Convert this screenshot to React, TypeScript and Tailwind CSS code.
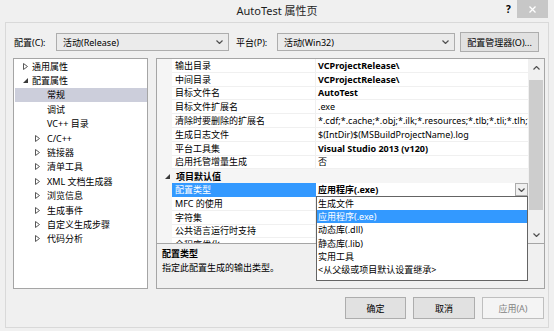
import React from 'react';

type TreeNode = { label: string; level: 1 | 2; arrow?: 'closed' | 'open'; selected?: boolean };

const treeItems: TreeNode[] = [
  { label: '通用属性', level: 1, arrow: 'closed' },
  { label: '配置属性', level: 1, arrow: 'open' },
  { label: '常规', level: 2, selected: true },
  { label: '调试', level: 2 },
  { label: 'VC++ 目录', level: 2 },
  { label: 'C/C++', level: 2, arrow: 'closed' },
  { label: '链接器', level: 2, arrow: 'closed' },
  { label: '清单工具', level: 2, arrow: 'closed' },
  { label: 'XML 文档生成器', level: 2, arrow: 'closed' },
  { label: '浏览信息', level: 2, arrow: 'closed' },
  { label: '生成事件', level: 2, arrow: 'closed' },
  { label: '自定义生成步骤', level: 2, arrow: 'closed' },
  { label: '代码分析', level: 2, arrow: 'closed' },
];

type GridRow = { name: string; value?: string; bold?: boolean; category?: boolean; selected?: boolean };

// values under the open list are hidden by it, so they are left empty
const gridRows: GridRow[] = [
  { name: '输出目录', value: 'VCProjectRelease\\', bold: true },
  { name: '中间目录', value: 'VCProjectRelease\\', bold: true },
  { name: '目标文件名', value: 'AutoTest', bold: true },
  { name: '目标文件扩展名', value: '.exe' },
  { name: '清除时要删除的扩展名', value: '*.cdf;*.cache;*.obj;*.ilk;*.resources;*.tlb;*.tli;*.tlh;*.tmp;*.rsp;*.pgc;*.pgd;*.meta' },
  { name: '生成日志文件', value: '$(IntDir)$(MSBuildProjectName).log' },
  { name: '平台工具集', value: 'Visual Studio 2013 (v120)', bold: true },
  { name: '启用托管增量生成', value: '否' },
  { name: '项目默认值', category: true },
  { name: '配置类型', value: '应用程序(.exe)', bold: true, selected: true },
  { name: 'MFC 的使用' },
  { name: '字符集' },
  { name: '公共语言运行时支持' },
  { name: '全程序优化' },
];

const listItems = ['生成文件', '应用程序(.exe)', '动态库(.dll)', '静态库(.lib)', '实用工具', '<从父级或项目默认设置继承>'];

const Arrow = ({ kind }: { kind: 'closed' | 'open' }) =>
  kind === 'closed' ? (
    <svg width="5" height="7" viewBox="0 0 5 7">
      <path d="M0.5 0.5 L4.5 3.5 L0.5 6.5 Z" fill="none" stroke="#595959" strokeWidth="1" />
    </svg>
  ) : (
    <svg width="5" height="5" viewBox="0 0 5 5">
      <path d="M5 0 L5 5 L0 5 Z" fill="#3a3a3a" />
    </svg>
  );

const Chevron = ({ up = false }: { up?: boolean }) => (
  <svg width="7" height="4" viewBox="0 0 7 4">
    <path d={up ? 'M0.5 3.5 L3.5 0.5 L6.5 3.5' : 'M0.5 0.5 L3.5 3.5 L6.5 0.5'} fill="none" stroke="#505050" strokeWidth="1.2" />
  </svg>
);

const Combo = ({ text, width }: { text: string; width: string }) => (
  <div className={`${width} h-[18px] border border-[#adadad] bg-[#ebebeb] flex items-center pl-[6px] pr-[5px]`}>
    <span className="flex-1">{text}</span>
    <Chevron />
  </div>
);

const App: React.FC = () => {
  return (
    <div className="w-[554px] h-[331px] bg-[#f0f0f0] overflow-hidden font-['Noto_Sans','Noto_Sans_CJK_SC',sans-serif] text-[9px] leading-none text-black">
      {/* title bar */}
      <div className="h-[22px] flex items-start">
        <div className="w-[54px]" />
        <div className="flex-1 text-center text-[11px] pt-[5px] text-[#1e1e1e]">AutoTest 属性页</div>
        <div className="w-[54px] flex items-start">
          <div className="w-[17px] pt-[4px] text-[10px] font-bold text-center">?</div>
          <div className="w-[31px] h-[18px] bg-[#c7c7c7] flex items-center justify-center">
            <svg width="7" height="7" viewBox="0 0 7 7">
              <path d="M0.5 0.5 L6.5 6.5 M6.5 0.5 L0.5 6.5" stroke="#fff" strokeWidth="1.3" />
            </svg>
          </div>
        </div>
      </div>

      {/* client area */}
      <div className="mx-[5px] h-[306px] border border-[#d9d9d9] flex flex-col">
        {/* config row */}
        <div className="mt-[9px] h-[20px] flex items-center pl-[8px]">
          <span className="w-[42px]">配置(C):</span>
          <Combo text="活动(Release)" width="w-[173px]" />
          <span className="ml-[7px] w-[41px]">平台(P):</span>
          <Combo text="活动(Win32)" width="w-[178px]" />
          <div className="ml-[5px] w-[79px] h-[20px] border border-[#adadad] bg-[#e1e1e1] flex items-center justify-center">
            配置管理器(O)...
          </div>
        </div>

        {/* panels */}
        <div className="mt-[6px] flex pl-[7px]">
          {/* tree */}
          <div className="w-[135px] h-[231px] border border-[#a5a5a5] bg-white">
            {treeItems.map((item) => (
              <div
                key={item.label}
                className={`h-[14.4px] flex items-center ml-[1px] ${item.selected ? 'bg-[#cccedb]' : ''} ${
                  item.level === 1 ? 'pl-[5px]' : 'pl-[17px]'
                }`}
              >
                <span className="w-[10px] flex items-center justify-center">{item.arrow && <Arrow kind={item.arrow} />}</span>
                <span className={item.level === 1 ? 'ml-[2px]' : 'ml-[5px]'}>{item.label}</span>
              </div>
            ))}
          </div>

          {/* property grid + description */}
          <div className="ml-[8px] w-[389px] h-[231px] border border-[#a5a5a5] bg-white flex flex-col relative">
            <div className="h-[184px] flex overflow-hidden">
              <div className="flex-1 flex flex-col overflow-hidden">
                {gridRows.map((row) =>
                  row.category ? (
                    <div key={row.name} className="h-[13.8px] shrink-0 flex items-center bg-[#f5f5f5]">
                      <span className="w-[15px] flex items-center justify-end pr-[2px]">
                        <Arrow kind="open" />
                      </span>
                      <span className="pl-[4px] font-bold">{row.name}</span>
                    </div>
                  ) : (
                    <div key={row.name} className="h-[13.8px] shrink-0 flex">
                      <div className="w-[15px] bg-[#f5f5f5]" />
                      <div
                        className={`w-[144px] flex items-center pl-[3px] border-b border-r ${
                          row.selected ? 'bg-[#3399ff] text-white border-[#3399ff]' : 'border-[#f0f0f0]'
                        }`}
                      >
                        {row.name}
                      </div>
                      <div
                        className={`flex-1 flex items-center pl-[2px] whitespace-nowrap overflow-hidden border-b border-[#f0f0f0] ${
                          row.bold ? 'font-bold' : ''
                        }`}
                      >
                        <span className="flex-1">{row.value}</span>
                        {row.selected && (
                          <span className="w-[13px] h-[13px] border border-[#acacac] bg-[#f0f0f0] flex items-center justify-center">
                            <Chevron />
                          </span>
                        )}
                      </div>
                    </div>
                  )
                )}
              </div>
              {/* scrollbar */}
              <div className="w-[16px] bg-[#f0f0f0] flex flex-col">
                <div className="h-[17px] flex items-center justify-center">
                  <Chevron up />
                </div>
                <div className="mt-[4px] h-[130px] mx-[1px] bg-[#cdcdcd]" />
                <div className="flex-1" />
                <div className="h-[17px] flex items-center justify-center">
                  <Chevron />
                </div>
              </div>
            </div>
            <div className="flex-1 border-t border-[#a5a5a5] bg-[#f0f0f0] pl-[5px] pt-[5px]">
              <div className="font-bold h-[14px]">配置类型</div>
              <div className="h-[14px]">指定此配置生成的输出类型。</div>
            </div>

            {/* open dropdown list */}
            <div className="absolute left-[159px] top-[137px] w-[212px] h-[85px] border border-[#646464] bg-white">
              {listItems.map((it) => (
                <div
                  key={it}
                  className={`h-[13.2px] flex items-center pl-[1px] ${it === '应用程序(.exe)' ? 'bg-[#3399ff] text-white' : ''}`}
                >
                  {it}
                </div>
              ))}
            </div>
          </div>
        </div>

        {/* buttons */}
        <div className="mt-[8px] flex justify-end pr-[4px] gap-[7px]">
          <div className="w-[61px] h-[22px] border border-[#adadad] bg-[#e1e1e1] flex items-center justify-center">确定</div>
          <div className="w-[62px] h-[22px] border border-[#adadad] bg-[#e1e1e1] flex items-center justify-center">取消</div>
          <div className="w-[62px] h-[22px] border border-[#bfbfbf] bg-[#f4f4f4] text-[#838383] flex items-center justify-center">
            应用(A)
          </div>
        </div>
      </div>
    </div>
  );
};

export default App;
